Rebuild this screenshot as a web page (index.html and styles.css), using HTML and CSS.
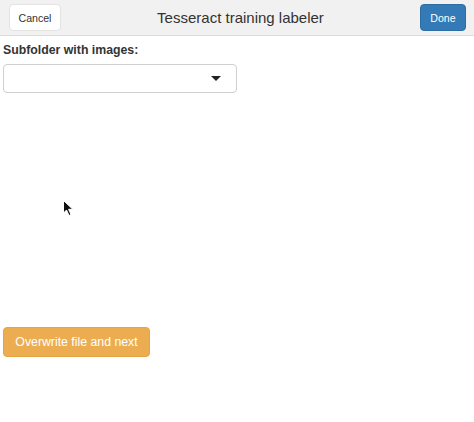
FILE: index.html
```html
<!DOCTYPE html>
<html>
<head>
<meta charset="utf-8">
<link rel="stylesheet" href="styles.css">
</head>
<body>
<header class="bar">
  <button class="btn btn-cancel">Cancel</button>
  <div class="title">Tesseract training labeler</div>
  <button class="btn btn-done">Done</button>
</header>
<main class="content">
  <label class="label">Subfolder with images:</label>
  <div class="select">
    <span class="caret"></span>
  </div>
  <div class="image-area"></div>
  <button class="btn btn-warn">Overwrite file and next</button>
</main>
<svg class="cursor" width="12" height="18" viewBox="0 0 12 18">
  <path d="M0.5 0.5 L0.5 13 L3.5 10 L6 15.5 L8 14.6 L5.6 9.3 L9.8 9.3 Z" fill="#111" stroke="#fff" stroke-width="1"/>
</svg>
</body>
</html>
```
FILE: styles.css
```css
html, body {
  margin: 0;
  padding: 0;
  background: #fff;
  font-family: "Liberation Sans", Arial, sans-serif;
  color: #333;
}
.bar {
  height: 36px;
  box-sizing: border-box;
  background: #f1f1f1;
  border-bottom: 1px solid #dcdcdc;
  display: flex;
  align-items: flex-start;
  padding: 4px 8px 0 9px;
}
.title {
  flex: 1;
  text-align: center;
  font-size: 15px;
  line-height: 27px;
  color: #333;
}
.btn {
  font-family: "Liberation Sans", Arial, sans-serif;
  font-size: 10.6px;
  border-radius: 4px;
  cursor: pointer;
  padding: 0;
}
.btn-cancel {
  width: 52px;
  height: 27px;
  background: #fff;
  border: 1px solid #e4e4e4;
  color: #333;
}
.btn-done {
  width: 46px;
  height: 27px;
  background: #337ab7;
  border: 1px solid #2e6da4;
  color: #fff;
}
.content {
  padding: 6px 3px 0 3px;
  display: flex;
  flex-direction: column;
  align-items: flex-start;
}
.label {
  font-weight: bold;
  font-size: 12.3px;
  line-height: 16px;
  color: #333;
}
.select {
  margin-top: 6px;
  width: 234px;
  height: 29px;
  box-sizing: border-box;
  border: 1px solid #d0d0d0;
  border-radius: 4px;
  background: #fff;
  display: flex;
  align-items: center;
  justify-content: flex-end;
  padding-right: 15px;
}
.caret {
  width: 0;
  height: 0;
  border-left: 5px solid transparent;
  border-right: 5px solid transparent;
  border-top: 5px solid #222;
}
.image-area {
  height: 234px;
}
.btn-warn {
  width: 147px;
  height: 30px;
  background: #ebad4f;
  border: 1px solid #e6a543;
  color: #fff;
  font-size: 12.3px;
}
.cursor {
  position: absolute;
  left: 63px;
  top: 200px;
}
```
